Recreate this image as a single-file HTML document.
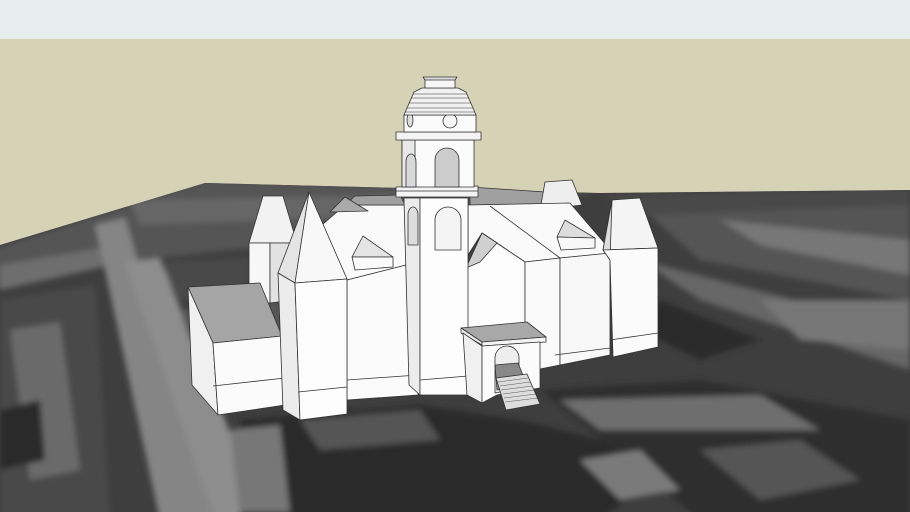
<!DOCTYPE html>
<html><head><style>
html,body{margin:0;padding:0;width:910px;height:512px;overflow:hidden;background:#d6d2b6}
svg{display:block}
</style></head><body>
<svg width="910" height="512" viewBox="0 0 910 512" xmlns="http://www.w3.org/2000/svg">
<defs>
<filter id="bl" x="-20%" y="-20%" width="140%" height="140%"><feGaussianBlur stdDeviation="3"/></filter>
<clipPath id="gc"><polygon points="0,245 205,183 600,193 910,190 910,512 0,512"/></clipPath>
</defs>
<rect width="910" height="512" fill="#d6d2b6"/>
<rect width="910" height="39" fill="#e8eded"/>
<g clip-path="url(#gc)">
<rect x="0" y="170" width="910" height="342" fill="#3e3e3e"/>
<g filter="url(#bl)">
<polygon points="-10,250 205,180 600,190 420,230 120,262 -10,290" fill="#555"/>
<polygon points="130,200 400,195 400,215 140,225" fill="#666"/>
<polygon points="0,265 120,245 125,262 0,290" fill="#6e6e6e"/>
<polygon points="95,225 125,218 215,520 160,520" fill="#858585"/>
<polygon points="125,262 160,258 265,520 215,520" fill="#8d8d8d"/>
<polygon points="160,262 250,258 250,290 180,300" fill="#4a4a4a"/>
<polygon points="0,300 95,285 110,520 0,520" fill="#4a4a4a"/>
<polygon points="10,330 60,322 80,470 30,480" fill="#6a6a6a"/>
<polygon points="0,410 40,400 45,460 0,470" fill="#2a2a2a"/>
<polygon points="600,195 910,188 910,215 650,215" fill="#4a4a4a"/>
<polygon points="650,215 910,205 910,300 700,260" fill="#555"/>
<polygon points="720,220 910,240 910,275 760,245" fill="#777"/>
<polygon points="640,260 910,330 910,370 700,300" fill="#666"/>
<polygon points="760,300 910,300 910,350 800,340" fill="#777"/>
<polygon points="660,300 760,340 700,360 640,330" fill="#2c2c2c"/>
<polygon points="240,420 420,405 520,420 680,460 600,520 240,520" fill="#2a2a2a"/>
<polygon points="540,390 700,380 910,420 910,520 700,520" fill="#2e2e2e"/>
<polygon points="560,400 760,395 820,430 600,430" fill="#6e6e6e"/>
<polygon points="700,450 800,440 860,480 760,500" fill="#555"/>
<polygon points="580,460 640,450 680,490 620,500" fill="#7a7a7a"/>
<polygon points="300,420 420,410 440,440 320,450" fill="#555"/>
<polygon points="180,310 280,300 290,330 190,340" fill="#555"/>
<polygon points="230,430 280,425 290,512 240,512" fill="#777"/>
</g>
</g>
<g stroke="#333" stroke-width="0.8" stroke-linejoin="round">
<polygon points="470,187 545,192 570,203 470,206" fill="#a0a0a0"/>
<polygon points="545,182 572,180 582,205 540,210" fill="#eee"/>
<polygon points="263,196 283,196 297,243 249,243" fill="#f2f2f2"/>
<polygon points="249,243 270,243 270,303 259,303 249,290" fill="#f7f7f7"/>
<polygon points="270,243 297,243 295,300 270,303" fill="#e2e2e2"/>
<polygon points="330,240 347,280 347,395 300,398 300,270" fill="#f8f8f8"/>
<polygon points="322,225 345,205 405,205 418,212 418,262 347,280" fill="#fafafa"/>
<polygon points="345,205 355,196 400,195 405,205" fill="#a0a0a0"/>
<polygon points="330,212 345,197 368,211" fill="#aaa"/>
<polygon points="347,280 418,262 418,395 347,400" fill="#fbfbfb"/>
<line x1="347" y1="380" x2="418" y2="375"/>
<polygon points="352,257 363,236 393,257" fill="#e4e4e4"/>
<polygon points="352,257 393,257 393,267 355,270" fill="#fafafa"/>
<polygon points="468,205 570,203 613,253 560,258 525,262 497,243 482,233 468,255" fill="#fafafa"/>
<line x1="490" y1="206" x2="560" y2="258"/>
<polygon points="466,268 482,233 525,262 525,375 466,380" fill="#fcfcfc"/>
<polygon points="466,268 482,233 497,243 480,262" fill="#cfcfcf"/>
<polygon points="525,262 560,258 560,365 525,372" fill="#fafafa"/>
<polygon points="560,258 610,253 610,355 560,365" fill="#f8f8f8"/>
<line x1="555" y1="355" x2="610" y2="348"/>
<polygon points="557,237 565,220 595,238" fill="#ddd"/>
<polygon points="557,237 595,238 595,248 561,250" fill="#f8f8f8"/>
<polygon points="612,200 640,198 658,248 603,250" fill="#f4f4f4"/>
<polygon points="603,250 612,200 610,260" fill="#ddd"/>
<polygon points="603,250 658,248 658,347 613,357 610,260" fill="#fbfbfb"/>
<line x1="610" y1="340" x2="658" y2="333"/>
<polygon points="404,198 420,198 420,395 409,385 404,200" fill="#ececec"/>
<polygon points="420,198 468,198 468,395 420,395" fill="#fdfdfd"/>
<line x1="420" y1="380" x2="468" y2="376"/>
<path d="M408,245 v-30 a5,8 0 0 1 10,0 v30 z" fill="#ddd"/>
<path d="M435,250 v-30 a13,13 0 0 1 26,0 v30 z" fill="#f4f4f4"/>
<polygon points="396,187 478,186 478,197 396,197" fill="#f4f4f4"/>
<line x1="396" y1="191" x2="478" y2="191"/>
<polygon points="402,140 474,140 474,187 402,187" fill="#fbfbfb"/>
<polygon points="402,140 415,140 415,187 402,187" fill="#e8e8e8"/>
<path d="M406,187 v-25 a5,8 0 0 1 10,0 v25 z" fill="#d8d8d8"/>
<path d="M435,187 v-27 a12,12 0 0 1 24,0 v27 z" fill="#ccc"/>
<polygon points="396,132 481,132 481,140 396,140" fill="#f4f4f4"/>
<polygon points="404,132 404,115 476,115 476,132" fill="#fbfbfb"/>
<circle cx="450" cy="121" r="7" fill="#f6f6f6"/>
<ellipse cx="410" cy="120" rx="3" ry="7" fill="#ddd"/>
<polygon points="404,115 414,92 422,88 458,88 466,92 476,115" fill="#f1f1f1"/>
<g stroke-width="0.5"><line x1="409" y1="103" x2="471" y2="103"/><line x1="411" y1="98" x2="469" y2="98"/><line x1="413" y1="94" x2="467" y2="94"/><line x1="407" y1="108" x2="473" y2="108"/><line x1="405" y1="112" x2="475" y2="112"/></g>
<polygon points="425,78 455,78 455,88 425,88" fill="#f7f7f7"/>
<polygon points="423,77 457,77 455,80 425,80" fill="#ddd"/>
<polygon points="188,287 260,283 282,336 213,343" fill="#a5a5a5"/>
<polygon points="188,287 213,343 218,415 192,385" fill="#f0f0f0"/>
<polygon points="213,343 282,336 285,405 218,415" fill="#fbfbfb"/>
<line x1="213" y1="386" x2="285" y2="378"/>
<polygon points="309,192 278,273 295,283" fill="#e4e4e4"/>
<polygon points="309,192 295,283 347,279" fill="#f8f8f8"/>
<polygon points="278,273 295,283 300,420 283,410" fill="#ececec"/>
<polygon points="295,283 347,279 347,414 300,420" fill="#fcfcfc"/>
<line x1="298" y1="392" x2="347" y2="387"/>
<polygon points="461,328 527,322 546,337 482,342" fill="#a8a8a8"/>
<polygon points="461,328 482,342 482,345 461,333" fill="#eee"/>
<polygon points="482,342 546,337 546,342 482,346" fill="#f4f4f4"/>
<polygon points="463,333 482,346 482,403 467,395" fill="#f0f0f0"/>
<polygon points="482,346 540,342 540,388 497,395 482,403" fill="#fbfbfb"/>
<path d="M495,393 v-35 a12,12 0 0 1 24,0 v30 z" fill="#eee"/>
<polygon points="495,365 518,363 527,385 497,390" fill="#888"/>
<polygon points="496,378 527,374 540,404 506,410" fill="#ddd"/>
<g stroke-width="0.4"><line x1="498" y1="382" x2="528" y2="378"/><line x1="500" y1="386" x2="530" y2="382"/><line x1="501" y1="390" x2="532" y2="386"/><line x1="503" y1="394" x2="534" y2="390"/><line x1="504" y1="398" x2="536" y2="394"/><line x1="505" y1="402" x2="538" y2="398"/></g>
</g>
</svg>
</body></html>
